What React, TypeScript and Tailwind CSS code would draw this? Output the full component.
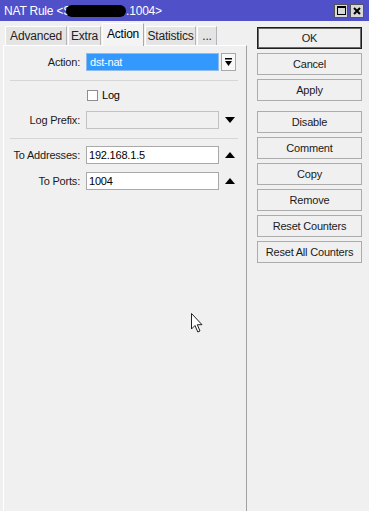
const labelCls = "w-[76px] shrink-0 text-right text-[#1a1a1a]";

function UpArrow() {
  return (
    <svg width="10" height="6" viewBox="0 0 10 6" className="ml-[6px]">
      <path d="M0 6 L5 0 L10 6 Z" fill="#000" />
    </svg>
  );
}

function DownArrow() {
  return (
    <svg width="10" height="6" viewBox="0 0 10 6" className="ml-[6px]">
      <path d="M0 0 L10 0 L5 6 Z" fill="#000" />
    </svg>
  );
}

function Separator() {
  return <div className="ml-[6px] w-[228px] border-t border-[#d6d6d6]" />;
}

function Tab({ label, w, active }: { label: string; w: string; active?: boolean }) {
  return (
    <div
      className={
        active
          ? `${w} h-[23px] -mb-px relative z-10 flex items-center justify-center bg-[#f4f4f4] border-t border-l border-white border-r border-r-[#a8a8a8] text-[12px] pb-[2px]`
          : `${w} h-[19px] flex items-center justify-center bg-[#e4e4e4] border-t border-l border-white border-r border-r-[#b4b4b4] text-[#222]`
      }
    >
      {label}
    </div>
  );
}

function Btn({ label, primary, extra = "" }: { label: string; primary?: boolean; extra?: string }) {
  return (
    <div
      className={`w-[105px] h-[22px] flex items-center justify-center text-[#1a1a1a] bg-[#f0f0f0] ${
        primary ? "border border-[#1e1e1e] shadow-[inset_0_0_0_1px_#6a6a6a]" : "border border-[#acacac]"
      } ${extra}`}
    >
      {label}
    </div>
  );
}

export default function App() {
  return (
    <div className="relative w-[369px] h-[511px] overflow-hidden bg-[#f0f0f0] flex flex-col font-['Liberation_Sans',Arial,sans-serif] text-[11px] tracking-[-0.2px]">
      {/* Title bar */}
      <div className="h-[21px] shrink-0 bg-[#5050c9] flex items-center pl-[4px] pr-[5px] text-white text-[12px]">
        <span>NAT Rule &lt;S</span>
        <span className="inline-block w-[60px] h-[12px] -ml-[5px] bg-black rounded-full" />
        <span>.1004&gt;</span>
        <div className="ml-auto flex gap-[2px]">
          <div className="w-[14px] h-[14px] bg-[#d8d8d8] border border-[#555] flex items-center justify-center">
            <div className="w-[9px] h-[9px] border border-black border-t-2" />
          </div>
          <div className="w-[14px] h-[14px] bg-[#d8d8d8] border border-[#555] flex items-center justify-center">
            <svg width="8" height="8" viewBox="0 0 8 8">
              <path d="M1 1 L7 7 M7 1 L1 7" stroke="#000" strokeWidth="2" />
            </svg>
          </div>
        </div>
      </div>

      <div className="flex flex-1">
        {/* Left pane */}
        <div className="w-[247px] shrink-0 flex flex-col pl-[3px]">
          <div className="h-[24px] flex items-end pl-[2px] gap-[1px] text-[12px]">
            <Tab label="Advanced" w="w-[62px]" />
            <Tab label="Extra" w="w-[33px]" />
            <Tab label="Action" w="w-[42px]" active />
            <Tab label="Statistics" w="w-[51px]" />
            <Tab label="..." w="w-[20px]" />
          </div>
          <div className="flex-1 flex flex-col border-t border-l border-white border-r border-r-[#a0a0a0]">
            {/* Action */}
            <div className="mt-[7px] h-[18px] flex items-center">
              <span className={labelCls}>Action:</span>
              <div className="ml-[6px] w-[133px] h-[18px] border border-[#8fbbe8] bg-[#3399ff] text-white pl-[3px] flex items-center">
                dst-nat
              </div>
              <div className="ml-[2px] w-[15px] h-[18px] border border-[#a8a8a8] bg-[#f8f8f8] flex items-center justify-center">
                <svg width="7" height="8" viewBox="0 0 7 8">
                  <rect x="0" y="0" width="7" height="1.5" fill="#000" />
                  <path d="M0 3 L7 3 L3.5 8 Z" fill="#000" />
                </svg>
              </div>
            </div>

            <div className="mt-[9px]">
              <Separator />
            </div>

            {/* Log */}
            <div className="mt-[8px] h-[12px] flex items-center pl-[83px]">
              <div className="w-[11px] h-[11px] bg-white border border-[#8e8e8e]" />
              <span className="ml-[4px]">Log</span>
            </div>

            {/* Log Prefix */}
            <div className="mt-[10px] h-[18px] flex items-center">
              <span className={labelCls}>Log Prefix:</span>
              <div className="ml-[6px] w-[133px] h-[18px] border border-[#c2c2c2] bg-[#f0f0f0]" />
              <DownArrow />
            </div>

            <div className="mt-[9px]">
              <Separator />
            </div>

            {/* To Addresses */}
            <div className="mt-[7px] h-[18px] flex items-center">
              <span className={labelCls}>To Addresses:</span>
              <div className="ml-[6px] w-[133px] h-[18px] border border-[#a9a9a9] bg-white pl-[2px] flex items-center">
                192.168.1.5
              </div>
              <UpArrow />
            </div>

            {/* To Ports */}
            <div className="mt-[8px] h-[18px] flex items-center">
              <span className={labelCls}>To Ports:</span>
              <div className="ml-[6px] w-[133px] h-[18px] border border-[#a9a9a9] bg-white pl-[2px] flex items-center">
                1004
              </div>
              <UpArrow />
            </div>
          </div>
        </div>

        {/* Right buttons */}
        <div className="flex flex-col pl-[10px] pt-[6px] gap-[4px]">
          <Btn label="OK" primary />
          <Btn label="Cancel" />
          <Btn label="Apply" />
          <Btn label="Disable" extra="mt-[6px]" />
          <Btn label="Comment" />
          <Btn label="Copy" />
          <Btn label="Remove" />
          <Btn label="Reset Counters" />
          <Btn label="Reset All Counters" />
        </div>
      </div>

      {/* Mouse cursor */}
      <svg className="absolute left-[191px] top-[313px]" width="13" height="21" viewBox="0 0 13 21">
        <path d="M0.5 0.5 L0.5 16 L4 12.5 L6.8 19 L9 18 L6.3 11.7 L11 11.7 Z" fill="#fff" stroke="#222" strokeWidth="1" />
      </svg>
    </div>
  );
}
